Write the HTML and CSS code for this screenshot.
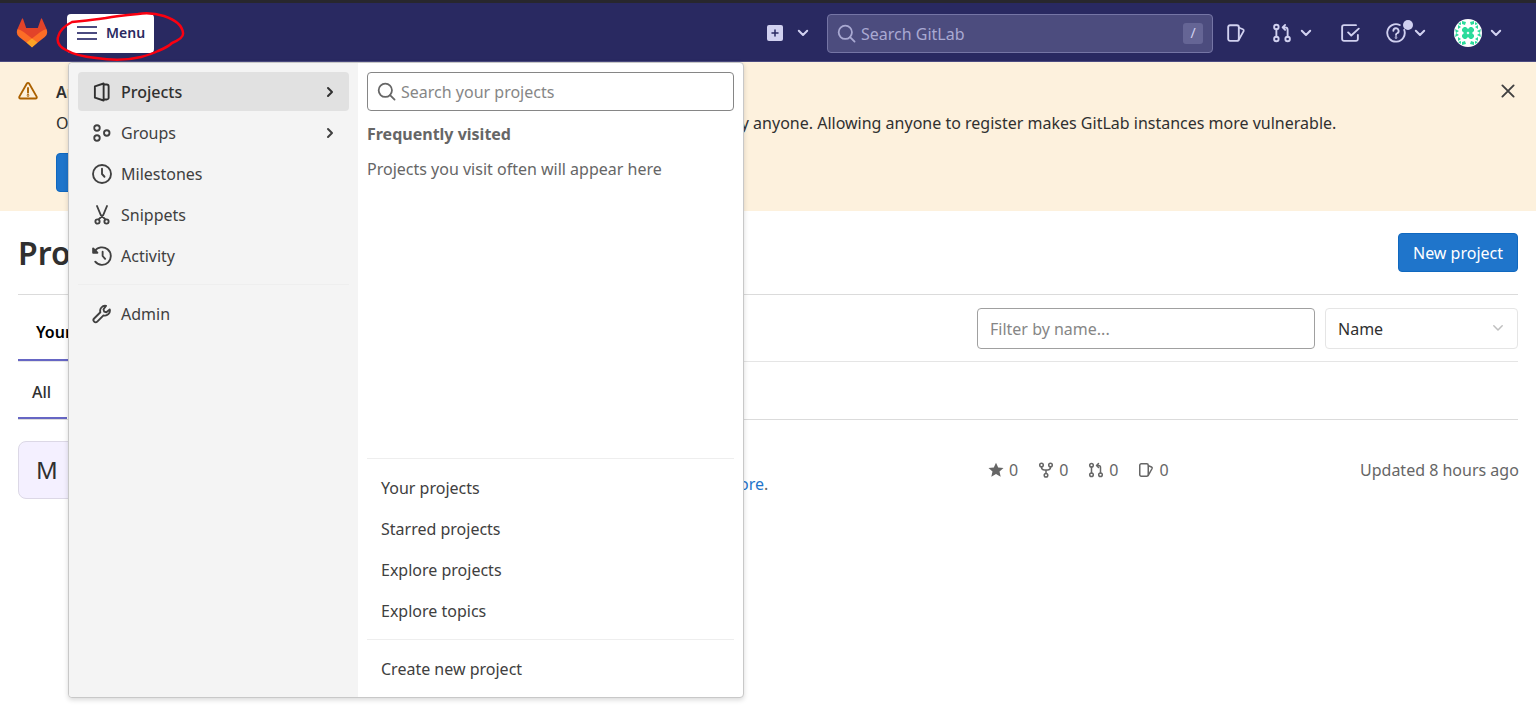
FILE: index.html
```
<!DOCTYPE html>
<html lang="en">
<head>
    <meta charset="UTF-8">
    <meta name="viewport" content="width=device-width, initial-scale=1">
    <title>Projects · GitLab</title>
    <link rel="stylesheet" href="styles.css">
</head>
<body>
    <svg class="sprite" aria-hidden="true">
        <symbol id="chevron-down" viewBox="0 0 16 16"><path d="M3.8 5.8 8 10l4.200-4.200"/></symbol>
        <symbol id="chevron-right" viewBox="0 0 16 16"><path d="M6 4l4 4-4 4"/></symbol>
        <symbol id="search" viewBox="0 0 16 16"><circle cx="7" cy="7" r="5.600"/><path d="M11 11l3.800 3.800"/></symbol>
        <symbol id="issues" viewBox="0 0 16 16"><rect x="1.750" y="1.750" width="8.500" height="12.500" rx="1.500"/><path d="M10.500 3.800 13.500 5q1 .5.6 1.500l-3.800 6.800"/></symbol>
        <symbol id="merge" viewBox="0 0 16 16"><circle cx="3.500" cy="3.200" r="1.800"/><circle cx="3.500" cy="12.800" r="1.800"/><circle cx="12.500" cy="12.800" r="1.800"/><path d="M3.500 5v6M12.500 11V5.500q0-2-2-2H9M10.500 1.500 8.500 3.500l2 2"/></symbol>
        <symbol id="todo" viewBox="0 0 16 16"><path d="M14.300 9.500v3.300a1.500 1.500 0 0 1-1.500 1.500H3.200a1.500 1.500 0 0 1-1.500-1.500V3.200a1.500 1.500 0 0 1 1.500-1.500h9.600M6.500 7.500l2.500 2.500 6-5.500"/></symbol>
        <symbol id="question" viewBox="0 0 16 16"><path d="M11 1.600a7 7 0 1 0 3.600 4"/><path d="M5.900 6.200a2.100 2.100 0 1 1 3 2Q8 8.600 8 9.500"/><circle class="solid" cx="8" cy="11.600" r=".3"/></symbol>
        <symbol id="project" viewBox="0 0 16 16"><path d="M9.300 1.200v13.600L2.300 12.500V3.500zM9.300 2h2.500a1.500 1.500 0 0 1 1.500 1.500v9a1.500 1.500 0 0 1-1.500 1.500h-2.500"/></symbol>
        <symbol id="group" viewBox="0 0 16 16"><circle cx="4" cy="4" r="2.200"/><circle cx="4" cy="12" r="2.200"/><circle cx="11.800" cy="8" r="2.200"/></symbol>
        <symbol id="clock" viewBox="0 0 16 16"><circle cx="8" cy="8" r="7.200"/><path d="M8 3.800V8l2 2.200"/></symbol>
        <symbol id="snippet" viewBox="0 0 16 16"><circle cx="4.400" cy="13.200" r="1.700"/><circle cx="11.600" cy="13.200" r="1.700"/><path d="M4 .8l3 7.200 3.700 3.500M12 .8 9 8l-3.700 3.500"/></symbol>
        <symbol id="history" viewBox="0 0 16 16"><path d="M2.600 12.500A7 7 0 1 0 2.200 4.200M8.500 4.500V8l2 2.300"/><path class="solid" d="M.9 2v3.400h3.400z"/></symbol>
        <symbol id="admin" viewBox="0 0 16 16"><path d="M11.200 1.500a4 4 0 0 0-4.500 5.100l-5 5a1.500 1.500 0 0 0 2.500 2.500l5-5a4 4 0 0 0 5-4.800l-2.700 2.300-1.800-.5-.5-1.900z"/></symbol>
        <symbol id="warning" viewBox="0 0 16 16"><path d="M8 1.500q.6 0 .9.500l6 10.500q.5 1.500-.9 1.500H2q-1.400 0-.9-1.500L7.100 2q.3-.5.900-.5zM8 5.500v3.800"/><circle class="solid" cx="8" cy="11.500" r=".3"/></symbol>
        <symbol id="close" viewBox="0 0 16 16"><path d="M3.500 3.500l9 9M12.500 3.500l-9 9"/></symbol>
        <symbol id="star" viewBox="0 0 16 16"><path class="solid" stroke="none" d="M8 .7l2.200 4.900 5.300.5-4 3.500 1.200 5.200L8 12.100l-4.700 2.700 1.200-5.200-4-3.500 5.300-.5z"/></symbol>
        <symbol id="fork" viewBox="0 0 16 16"><circle cx="3.500" cy="3" r="1.800"/><circle cx="12.500" cy="3" r="1.800"/><circle cx="8" cy="13.200" r="1.800"/><path d="M3.500 5q0 3 3 3h3q3 0 3-3M8 8v3.300"/></symbol>
    </svg>

    <header class="navbar">
        <a href="#" class="logo" aria-label="GitLab">
            <svg viewBox="0 0 32 30">
                <path fill="#e24329" d="M1.500 11 6 .8q.5-1 1 0L10.200 10h11.600L25 .8q.5-1 1 0L30.500 11 16 29z"/>
                <path fill="#fc6d26" d="M1.500 11q-2 5 1.700 8L16 29l12.800-10q3.700-3 1.700-8-3.300.8-6.500 3.200L16 20.500l-8-6.300Q4.800 11.800 1.500 11z"/>
                <path fill="#fca326" d="M10.500 24.600 16 20.500l5.500 4.100L16 29.500z"/>
            </svg>
        </a>
        <button class="menu-button" aria-expanded="true">
            <svg viewBox="0 0 20 16"><path d="M0 2h20M0 8h20M0 14h20"/></svg>
            Menu
        </button>

        <div class="nav-right">
            <button class="nav-item new-item" aria-label="Create new">
                <svg class="icon plus" viewBox="0 0 16 16"><rect class="solid" width="16" height="16" rx="2"/><path d="M8 5v6M5 8h6"/></svg>
                <svg class="icon chevron"><use href="#chevron-down"/></svg>
            </button>
            <div class="nav-search">
                <svg class="icon"><use href="#search"/></svg>
                <input type="text" placeholder="Search GitLab" aria-label="Search GitLab">
                <kbd>/</kbd>
            </div>
            <nav class="nav-icons">
                <a href="#" class="nav-item" aria-label="Issues"><svg class="icon"><use href="#issues"/></svg></a>
                <button class="nav-item" aria-label="Merge requests">
                    <svg class="icon"><use href="#merge"/></svg>
                    <svg class="icon chevron"><use href="#chevron-down"/></svg>
                </button>
                <a href="#" class="nav-item" aria-label="To-Do List"><svg class="icon"><use href="#todo"/></svg></a>
                <button class="nav-item" aria-label="Help">
                    <svg class="icon"><use href="#question"/></svg>
                    <span class="dot"></span>
                    <svg class="icon chevron"><use href="#chevron-down"/></svg>
                </button>
                <button class="nav-item" aria-label="Your profile">
                    <svg class="avatar" viewBox="0 0 28 28">
                        <circle cx="14" cy="14" r="14" fill="#fff"/>
                        <path fill="#2bdb9b" d="M10 8h2l2 2 2-2h2l2 2v2l-2 2 2 2v2l-2 2h-2l-2-2-2 2h-2l-2-2v-2l2-2-2-2v-2z"/>
                        <path fill="#fff" d="M14 12.500l1.500 1.500-1.500 1.500-1.500-1.500z"/>
                        <path fill="#2bdb9b" d="M8 2l4 1-1 3-3-1zM20 2l-4 1 1 3 3-1zM8 26l4-1-1-3-3 1zM20 26l-4-1 1-3 3 1zM4 6l3 2-3 2zM24 6l-3 2 3 2zM4 22l3-2-3-2zM24 22l-3-2 3-2zM1 10l4 2-3 2zM27 10l-4 2 3 2zM1 18l4-2-3-2zM27 18l-4-2 3-2zM4 5l3-2v3zM24 5l-3-2v3zM4 23l3 2v-3zM24 23l-3 2v-3z"/>
                    </svg>
                    <svg class="icon chevron"><use href="#chevron-down"/></svg>
                </button>
            </nav>
        </div>

        <div class="dropdown">
            <div class="dropdown-side">
                <a href="#" class="menu-item active"><svg class="icon"><use href="#project"/></svg>Projects<svg class="icon chevron"><use href="#chevron-right"/></svg></a>
                <a href="#" class="menu-item"><svg class="icon"><use href="#group"/></svg>Groups<svg class="icon chevron"><use href="#chevron-right"/></svg></a>
                <a href="#" class="menu-item"><svg class="icon"><use href="#clock"/></svg>Milestones</a>
                <a href="#" class="menu-item"><svg class="icon"><use href="#snippet"/></svg>Snippets</a>
                <a href="#" class="menu-item"><svg class="icon"><use href="#history"/></svg>Activity</a>
                <hr>
                <a href="#" class="menu-item"><svg class="icon"><use href="#admin"/></svg>Admin</a>
            </div>
            <div class="dropdown-main">
                <div class="project-search">
                    <svg class="icon"><use href="#search"/></svg>
                    <input type="text" placeholder="Search your projects" aria-label="Search your projects">
                </div>
                <div class="frequent">
                    <h2>Frequently visited</h2>
                    <p>Projects you visit often will appear here</p>
                </div>
                <hr>
                <a href="#" class="menu-item">Your projects</a>
                <a href="#" class="menu-item">Starred projects</a>
                <a href="#" class="menu-item">Explore projects</a>
                <a href="#" class="menu-item">Explore topics</a>
                <hr>
                <a href="#" class="menu-item">Create new project</a>
            </div>
        </div>

        <!-- hand-drawn ring around the menu button -->
        <svg class="ring" viewBox="0 0 130 52"><path d="M50 8Q35 10 26 11L16 12Q4 18 2 27q-2 8 8 13 10 6 30 8 25 4 45-1 11-3 17-6 10-4 14-8 12-5 11-10-1-11-19-17Q95 2 82 4 60 6 50 8"/></svg>
    </header>

    <section class="alert">
        <svg class="icon"><use href="#warning"/></svg>
        <div class="alert-body">
            <h2>Anyone can register for an account.</h2>
            <p>Only allow anyone to register for accounts on GitLab instances that you intend to be used by anyone. Allowing anyone to register makes GitLab instances more vulnerable.</p>
            <button class="btn">Turn off</button>
        </div>
        <button class="close" aria-label="Dismiss"><svg class="icon"><use href="#close"/></svg></button>
    </section>

    <main>
        <div class="title-row">
            <h1>Projects</h1>
            <button class="btn">New project</button>
        </div>
        <div class="tabs-row">
            <nav class="tabs">
                <a href="#" class="active">Your projects</a>
            </nav>
            <div class="filters">
                <input type="text" placeholder="Filter by name..." aria-label="Filter by name">
                <div class="sort">
                    <select aria-label="Sort by"><option>Name</option></select>
                    <svg class="icon"><use href="#chevron-down"/></svg>
                </div>
            </div>
        </div>
        <nav class="subtabs">
            <a href="#" class="active">All</a>
        </nav>

        <div class="project">
            <div class="project-avatar">M</div>
            <div class="project-info">
                <p>This project is automatically generated and helps monitor this GitLab instance. <a href="#">Learn more</a>.</p>
            </div>
            <div class="stats">
                <span><svg class="icon"><use href="#star"/></svg>0</span>
                <span><svg class="icon"><use href="#fork"/></svg>0</span>
                <span><svg class="icon"><use href="#merge"/></svg>0</span>
                <span><svg class="icon"><use href="#issues"/></svg>0</span>
            </div>
            <div class="updated">Updated 8 hours ago</div>
        </div>
    </main>
</body>
</html>
```
FILE: styles.css
```
* {
    box-sizing: border-box;
}
body {
    margin: 0;
    min-height: 100vh;
    font-family: "Noto Sans", "Open Sans", sans-serif;
    font-size: 16px;
    line-height: 24px;
    color: #303030;
    background-color: #fff;
}
h1, h2, p {
    margin: 0;
}
a {
    color: #1f75cb;
    text-decoration: none;
}
button, input, select {
    font: inherit;
}
button {
    border: none;
    background: none;
    padding: 0;
    cursor: pointer;
}
.sprite {
    position: absolute;
    width: 0;
    height: 0;
}
.icon {
    width: 20px;
    height: 20px;
    flex-shrink: 0;
    fill: none;
    stroke: currentColor;
    stroke-width: 1.5;
    stroke-linecap: round;
    stroke-linejoin: round;
}
.solid {
    fill: currentColor;
}
.icon.chevron {
    width: 16px;
    height: 16px;
    stroke-width: 2;
}

/* navbar */
.navbar {
    position: relative;
    display: flex;
    align-items: center;
    height: 62px;
    padding: 2px 32px 0 16px;
    background-color: #292961;
    border-top: 3px solid #28272d;
    border-bottom: 1px solid #4b4b80;
}
.logo svg {
    display: block;
    width: 32px;
    height: 30px;
}
.menu-button {
    display: flex;
    align-items: center;
    gap: 9px;
    height: 39px;
    margin-left: 19px;
    padding: 0 9px 0 10px;
    border-radius: 4px;
    background-color: #fff;
    color: #292961;
    font-size: 14px;
    font-weight: 600;
}
.menu-button svg {
    width: 20px;
    height: 16px;
    stroke: #4b4b80;
    stroke-width: 2;
}
.nav-right {
    display: flex;
    align-items: center;
    margin-left: auto;
    color: #d1d1f0;
}
.nav-item {
    position: relative;
    display: flex;
    align-items: center;
    gap: 6px;
    color: inherit;
}
.new-item {
    gap: 12px;
    margin-right: 16px;
}
.icon.plus {
    width: 16px;
    height: 16px;
    stroke: #292961;
}
.plus .solid {
    fill: #d1d1f0;
    stroke: none;
}
.nav-search {
    display: flex;
    align-items: center;
    width: 386px;
    height: 39px;
    padding: 0 9px;
    border: 1px solid #7575a5;
    border-radius: 4px;
    background-color: #4c4c7e;
    color: #a9a9d2;
}
.nav-search .icon, .project-search .icon {
    width: 19px;
    height: 19px;
}
.nav-search input, .project-search input {
    flex: 1;
    min-width: 0;
    padding: 1px 5px 0;
    border: none;
    outline: none;
    background: none;
    color: inherit;
}
.nav-search input::placeholder {
    color: #a9a9d2;
}
kbd {
    width: 20px;
    height: 21px;
    border-radius: 3px;
    background-color: #656595;
    color: #d1d1f0;
    font-family: inherit;
    font-size: 14px;
    line-height: 20px;
    text-align: center;
}
.nav-icons {
    display: flex;
    align-items: center;
    gap: 26px;
    margin-left: 13px;
}
.dot {
    position: absolute;
    top: -3px;
    left: 17px;
    width: 10px;
    height: 10px;
    border-radius: 50%;
    background-color: #d1d1f0;
}
.avatar {
    width: 28px;
    height: 28px;
}
.ring {
    position: absolute;
    top: 7px;
    left: 56px;
    width: 130px;
    height: 52px;
    fill: none;
    stroke: #fa0010;
    stroke-width: 2.5;
    stroke-linecap: round;
    pointer-events: none;
}

/* top menu dropdown */
.dropdown {
    position: absolute;
    top: 59px;
    left: 68px;
    z-index: 10;
    display: flex;
    width: 676px;
    border: 1px solid #c8c8c8;
    border-radius: 4px;
    background-color: #fff;
    box-shadow: 0 2px 5px rgba(0, 0, 0, 0.15);
}
.dropdown hr {
    height: 1px;
    margin: 9px 0;
    border: none;
    background-color: #eee;
}
.dropdown-side {
    width: 289px;
    padding: 9px;
    border-radius: 4px 0 0 4px;
    background-color: #f4f4f4;
}
.dropdown-main {
    flex: 1;
    padding: 9px 9px 7px 9px;
}
.menu-item {
    display: flex;
    align-items: center;
    gap: 9px;
    height: 39px;
    margin-bottom: 2px;
    padding: 1px 14px 0;
    border-radius: 4px;
    color: #404040;
}
.menu-item .chevron {
    margin-left: auto;
    margin-right: -3px;
}
.menu-item.active {
    background-color: #e1e1e1;
    font-weight: 500;
    color: #303030;
}
.project-search {
    display: flex;
    align-items: center;
    height: 39px;
    padding: 0 9px;
    border: 1px solid #868686;
    border-radius: 4px;
    color: #666;
}
input::placeholder {
    color: #868686;
    opacity: 1;
}
.frequent {
    min-height: 338px;
    padding-top: 11px;
    color: #666;
}
.frequent h2 {
    margin-bottom: 11px;
    font-size: 16px;
    line-height: 24px;
    font-weight: 700;
}

/* alert */
.alert {
    display: flex;
    align-items: flex-start;
    padding: 19px 18px;
    background-color: #fdf1dd;
}
.alert > .icon {
    color: #ab6100;
}
.alert-body {
    flex: 1;
    margin-left: 18px;
}
.alert h2 {
    margin-bottom: 7px;
    font-size: 16px;
    line-height: 23px;
    font-weight: 600;
}
.alert p {
    margin-bottom: 18px;
}
.close {
    display: flex;
    color: #404040;
}
.btn {
    height: 39px;
    padding: 0 14px;
    border: 1px solid #1068bf;
    border-radius: 4px;
    background-color: #1f75cb;
    color: #fff;
}

/* projects page */
main {
    padding: 0 18px;
}
.title-row {
    display: flex;
    align-items: center;
    justify-content: space-between;
    height: 84px;
    border-bottom: 1px solid #dbdbdb;
}
h1 {
    font-size: 32px;
    line-height: 40px;
    font-weight: 600;
}
.tabs-row {
    display: flex;
    justify-content: space-between;
    align-items: stretch;
    height: 67px;
    border-bottom: 1px solid #e5e5e5;
}
.tabs, .subtabs {
    display: flex;
}
.tabs a, .subtabs a {
    display: flex;
    align-items: center;
    padding: 9px 18px 0;
    color: #666;
}
.tabs a.active, .subtabs a.active {
    border-bottom: 2px solid #6666c4;
    color: #000;
    font-weight: 600;
}
.filters {
    display: flex;
    align-items: center;
    gap: 10px;
}
.filters input {
    width: 338px;
    height: 41px;
    padding: 2px 12px 0;
    border: 1px solid #a0a0a0;
    border-radius: 4px;
}
.sort {
    position: relative;
    width: 193px;
}
.sort select {
    width: 100%;
    height: 41px;
    padding: 2px 12px 0;
    border: 1px solid #e5e5e5;
    border-radius: 4px;
    background-color: #fff;
    color: #303030;
    appearance: none;
}
.sort .icon {
    position: absolute;
    top: 12px;
    right: 12px;
    width: 16px;
    height: 16px;
    color: #bfbfbf;
    pointer-events: none;
}
.subtabs {
    height: 58px;
    border-bottom: 1px solid #dbdbdb;
}
.subtabs a {
    padding: 4px 16px 0 14px;
}
.subtabs a.active {
    color: #303030;
    font-weight: 500;
}
.project {
    display: flex;
    align-items: center;
    padding: 21px 0;
    color: #666;
}
.project-avatar {
    width: 58px;
    height: 58px;
    border: 1px solid #dcd8e6;
    border-radius: 8px;
    background-color: #f4f0ff;
    color: #303030;
    font-size: 24px;
    line-height: 56px;
    text-align: center;
}
.project-info {
    flex: 1;
    align-self: flex-end;
    margin-left: 8px;
    padding-bottom: 3px;
}
.stats {
    display: flex;
    gap: 20px;
    width: 372px;
}
.stats span {
    display: flex;
    align-items: center;
    gap: 5px;
}
.stats .icon {
    width: 16px;
    height: 16px;
}
.updated {
    width: 158px;
    text-align: right;
    white-space: nowrap;
}
```
